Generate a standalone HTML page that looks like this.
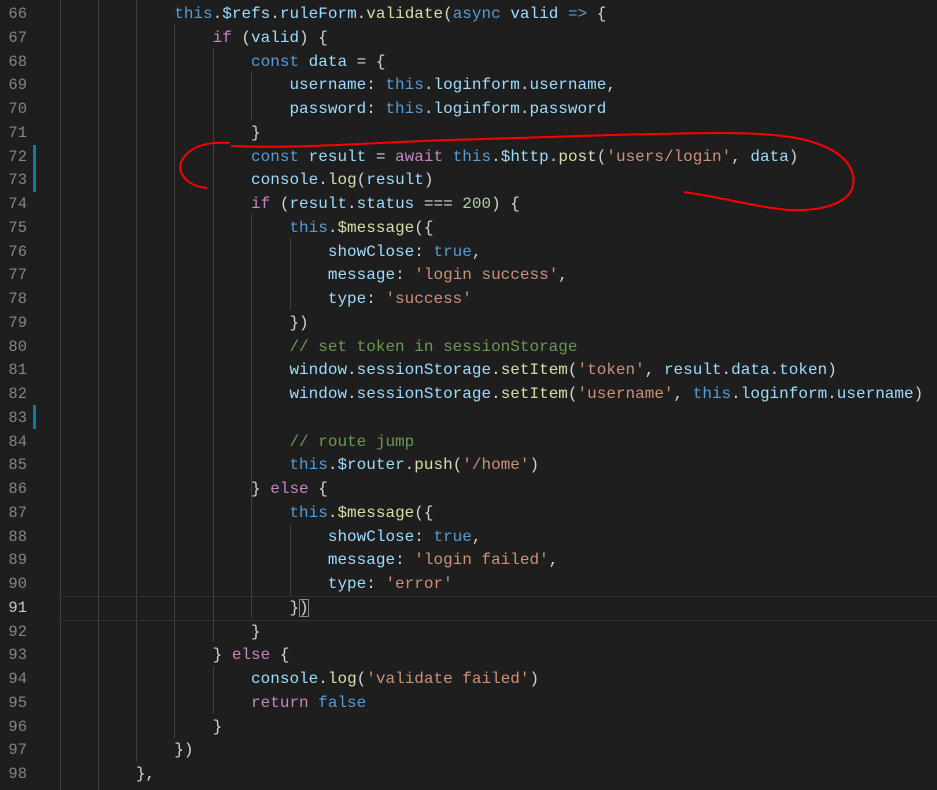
<!DOCTYPE html>
<html><head><style>
body{margin:0;width:937px;height:790px;background:#1e1e1e;overflow:hidden;position:relative;font-family:"Liberation Mono",monospace;font-size:16px}
.l{position:absolute;left:0;height:24px;line-height:24px;width:937px;white-space:pre}
.n{position:absolute;left:0;width:27px;text-align:right;color:#858585;font-size:15.5px}
.c{position:absolute;left:59px;color:#d4d4d4}
.k{color:#569cd6}.p{color:#c586c0}.v{color:#9cdcfe}.f{color:#dcdcaa}.s{color:#ce9178}.m{color:#6a9955}.u{color:#b5cea8}
.g{position:absolute;width:1px;background:#404040}
.ch{position:absolute;left:33px;width:3px;background:#0c7d9d;height:24px}
</style></head><body>
<div class="ch" style="top:145px;height:47px"></div>
<div class="ch" style="top:405px"></div>
<div style="position:absolute;left:60px;top:596px;width:877px;height:23px;border-top:1px solid #303030;border-bottom:1px solid #303030"></div>
<div class="g" style="left:60px;top:0;height:790px"></div>
<div class="g" style="left:98px;top:0;height:790px"></div>
<div class="g" style="left:136px;top:0;height:762px"></div>
<div class="g" style="left:174px;top:24px;height:714px"></div>
<div class="g" style="left:213px;top:48px;height:594px"></div>
<div class="g" style="left:213px;top:666px;height:48px"></div>
<div class="g" style="left:251px;top:72px;height:48px"></div>
<div class="g" style="left:251px;top:214px;height:404px"></div>
<div class="g" style="left:290px;top:238px;height:72px"></div>
<div class="g" style="left:290px;top:524px;height:72px"></div>
<div id="code"></div>
<script>
var L=[
['66','            <span class="k">this</span>.<span class="v">$refs</span>.<span class="v">ruleForm</span>.<span class="f">validate</span>(<span class="k">async</span> <span class="v">valid</span> <span class="k">=&gt;</span> {'],
['67','                <span class="p">if</span> (<span class="v">valid</span>) {'],
['68','                    <span class="k">const</span> <span class="v">data</span> = {'],
['69','                        <span class="v">username</span>: <span class="k">this</span>.<span class="v">loginform</span>.<span class="v">username</span>,'],
['70','                        <span class="v">password</span>: <span class="k">this</span>.<span class="v">loginform</span>.<span class="v">password</span>'],
['71','                    }'],
['72','                    <span class="k">const</span> <span class="v">result</span> = <span class="p">await</span> <span class="k">this</span>.<span class="v">$http</span>.<span class="f">post</span>(<span class="s">\'users/login\'</span>, <span class="v">data</span>)'],
['73','                    <span class="v">console</span>.<span class="f">log</span>(<span class="v">result</span>)'],
['74','                    <span class="p">if</span> (<span class="v">result</span>.<span class="v">status</span> === <span class="u">200</span>) {'],
['75','                        <span class="k">this</span>.<span class="f">$message</span>({'],
['76','                            <span class="v">showClose</span>: <span class="k">true</span>,'],
['77','                            <span class="v">message</span>: <span class="s">\'login success\'</span>,'],
['78','                            <span class="v">type</span>: <span class="s">\'success\'</span>'],
['79','                        })'],
['80','                        <span class="m">// set token in sessionStorage</span>'],
['81','                        <span class="v">window</span>.<span class="v">sessionStorage</span>.<span class="f">setItem</span>(<span class="s">\'token\'</span>, <span class="v">result</span>.<span class="v">data</span>.<span class="v">token</span>)'],
['82','                        <span class="v">window</span>.<span class="v">sessionStorage</span>.<span class="f">setItem</span>(<span class="s">\'username\'</span>, <span class="k">this</span>.<span class="v">loginform</span>.<span class="v">username</span>)'],
['83',''],
['84','                        <span class="m">// route jump</span>'],
['85','                        <span class="k">this</span>.<span class="v">$router</span>.<span class="f">push</span>(<span class="s">\'/home\'</span>)'],
['86','                    } <span class="p">else</span> {'],
['87','                        <span class="k">this</span>.<span class="f">$message</span>({'],
['88','                            <span class="v">showClose</span>: <span class="k">true</span>,'],
['89','                            <span class="v">message</span>: <span class="s">\'login failed\'</span>,'],
['90','                            <span class="v">type</span>: <span class="s">\'error\'</span>'],
['91','                        }<span style="outline:1px solid #888;outline-offset:-1px">)</span>'],
['92','                    }'],
['93','                } <span class="p">else</span> {'],
['94','                    <span class="v">console</span>.<span class="f">log</span>(<span class="s">\'validate failed\'</span>)'],
['95','                    <span class="p">return</span> <span class="k">false</span>'],
['96','                }'],
['97','            })'],
['98','        },']];
var h='';L.forEach(function(r,i){var t=2+i*23.75;h+='<div class="l" style="top:'+t+'px"><span class="n"'+(r[0]=='91'?' style="color:#c6c6c6"':'')+'>'+r[0]+'</span><span class="c">'+r[1]+'</span></div>';});
document.getElementById('code').innerHTML=h;
</script>
<svg width="937" height="790" style="position:absolute;left:0;top:0" fill="none" stroke="#f00" stroke-width="2">
<path d="M229 143 C200 141 188 150 182 160 C176 172 186 186 207 188"/>
<path d="M231 146 C300 149 380 142 450 140 C560 137 650 133 720 133 C790 133 815 140 835 152 C858 167 855 185 850 193 C840 205 820 211 790 210 C760 208 720 197 684 192"/>
</svg>
</body></html>
